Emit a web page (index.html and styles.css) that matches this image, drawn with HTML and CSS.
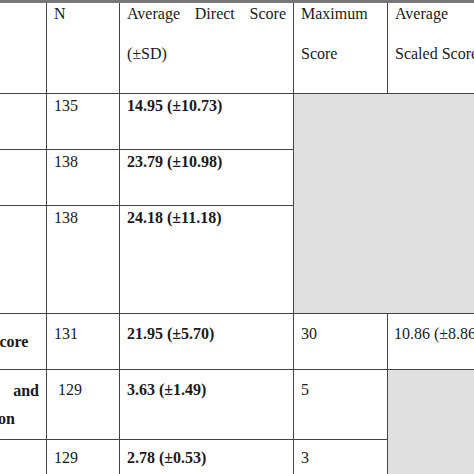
FILE: index.html
```html
<!DOCTYPE html>
<html lang="en">
<head>
<meta charset="utf-8">
<title>Scores</title>
<link rel="stylesheet" href="styles.css">
</head>
<body>
<div class="crop">
  <table class="scores">
    <colgroup>
      <col class="c-label"><col class="c-n"><col class="c-avg"><col class="c-max"><col class="c-scaled">
    </colgroup>
    <thead>
      <tr class="r-head">
        <th class="label"></th>
        <th><div class="hd">N</div></th>
        <th><div class="hd">Average Direct Score (±SD)</div></th>
        <th><div class="hd">Maximum Score</div></th>
        <th><div class="hd">Average Scaled Score</div></th>
      </tr>
    </thead>
    <tbody>
      <tr class="r1">
        <td class="label"></td>
        <td>135</td>
        <td class="b">14.95 (±10.73)</td>
        <td class="na" rowspan="3" colspan="2"></td>
      </tr>
      <tr class="r2">
        <td class="label"></td>
        <td>138</td>
        <td class="b">23.79 (±10.98)</td>
      </tr>
      <tr class="r3">
        <td class="label"></td>
        <td>138</td>
        <td class="b">24.18 (±11.18)</td>
      </tr>
      <tr class="r4 lower">
        <td class="label">Overall Score</td>
        <td>131</td>
        <td class="b">21.95 (±5.70)</td>
        <td>30</td>
        <td class="wide">10.86 (±8.86)</td>
      </tr>
      <tr class="r5 lower">
        <td class="label">Attention and Orientation</td>
        <td class="indent">129</td>
        <td class="b">3.63 (±1.49)</td>
        <td>5</td>
        <td class="na" rowspan="2"></td>
      </tr>
      <tr class="r6 lower">
        <td class="label"></td>
        <td>129</td>
        <td class="b">2.78 (±0.53)</td>
        <td>3</td>
      </tr>
    </tbody>
  </table>
</div>
</body>
</html>
```

FILE: styles.css
```css
html, body {
  margin: 0;
  padding: 0;
  background: #ffffff;
}

body {
  width: 474px;
  height: 474px;
  overflow: hidden;
  font-family: "Liberation Serif", "Times New Roman", serif;
  font-size: 16px;
  color: #1a1a1a;
}

.crop {
  margin-left: -73px;
}

.scores {
  border-collapse: collapse;
  table-layout: fixed;
  width: 564px;
  border-top: 3px solid #777777;
}

.c-label { width: 119px; }
.c-n { width: 73px; }
.c-avg { width: 174px; }
.c-max { width: 94px; }
.c-scaled { width: 104px; }

.scores th,
.scores td {
  border: 1px solid #444444;
  padding: 0 7px;
  vertical-align: top;
  text-align: left;
  font-weight: normal;
  line-height: 24px;
}

.scores th {
  line-height: 40px;
  text-align: justify;
}

.hd {
  margin-top: -9px;
}

.r-head { height: 92px; }
.r1 { height: 56px; }
.r2 { height: 56px; }
.r3 { height: 108px; }
.r4 { height: 56px; }
.r5 { height: 70px; }
.r6 { height: 60px; }

.scores .lower td {
  padding-top: 8px;
}

.scores .r6 td {
  padding-top: 6px;
}

.scores td.label {
  padding-top: 0;
  vertical-align: middle;
  font-weight: bold;
  text-align: justify;
  line-height: 28px;
}

.scores td.b {
  font-weight: bold;
}

.scores td.wide {
  white-space: nowrap;
  padding-left: 6px;
}

.indent {
  text-indent: 4px;
}

.scores td.na {
  background: #e0e0e0;
}
```
